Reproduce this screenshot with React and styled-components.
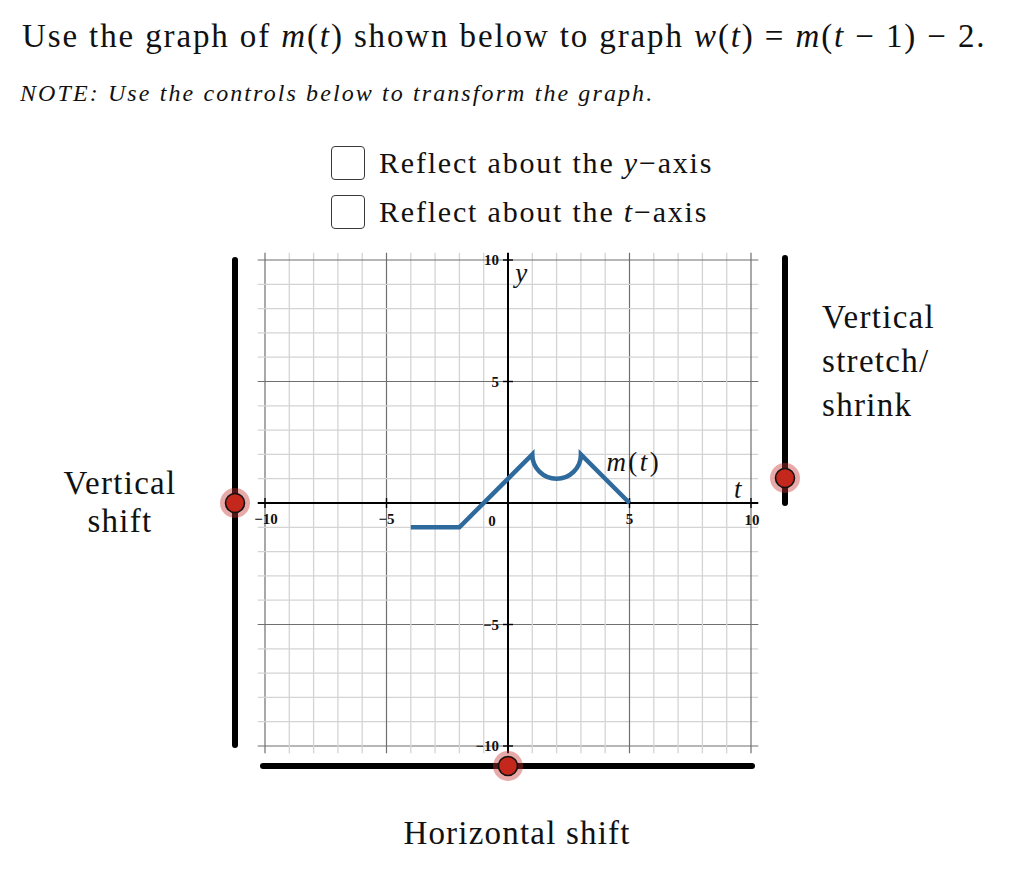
import React from 'react';
import styled, { createGlobalStyle } from 'styled-components';

const GlobalStyle = createGlobalStyle`
  body {
    margin: 0;
    background: #fff;
    color: #111;
    font-family: "Liberation Serif", "DejaVu Serif", serif;
  }
`;

const Page = styled.div`
  width: 1024px;
  padding-top: 16px;
`;

const Prompt = styled.div`
  margin-left: 22px;
  font-size: 33px;
  line-height: 40px;
  letter-spacing: 1.88px;
  white-space: nowrap;
`;

const Note = styled.div`
  margin: 22px 0 0 20px;
  font-size: 24px;
  line-height: 30px;
  font-style: italic;
  letter-spacing: 2.1px;
  white-space: nowrap;
`;

const Var = styled.i`
  font-style: italic;
`;

const Options = styled.div`
  margin: 30px 0 0 331px;
  display: flex;
  flex-direction: column;
`;

const OptionRow = styled.label`
  height: 49px;
  display: flex;
  align-items: center;
  gap: 14px;
  font-size: 30px;
  letter-spacing: 1.8px;
`;

const CheckBox = styled.span`
  box-sizing: border-box;
  width: 34px;
  height: 34px;
  border: 1.5px solid #3a3a3a;
  border-radius: 4px;
  background: #fff;
`;

const Board = styled.div`
  margin-top: 9px;
  display: grid;
  grid-template-columns: 220px 580px 1fr;
  align-items: start;
`;

const SideLabel = styled.div`
  font-size: 33px;
  letter-spacing: 1.3px;
  line-height: ${(p) => (p.$side === 'left' ? '38px' : '44px')};
  text-align: ${(p) => (p.$side === 'left' ? 'center' : 'left')};
  padding: ${(p) => (p.$side === 'left' ? '219px 0 0 20px' : '50px 0 0 22px')};
`;

const BottomLabel = styled.div`
  margin: 23px 0 0 227px;
  width: 580px;
  text-align: center;
  font-size: 33px;
  line-height: 40px;
  letter-spacing: 1.2px;
`;

const Canvas = styled.svg`
  display: block;
  overflow: visible;
`;

// board geometry (svg pixels)
const U = 24.3;
const OX = 288;
const OY = 258;
const X = (t) => OX + U * t;
const Y = (v) => OY - U * v;
const EXT = 10.3;

const BLUE = '#2f6a9c';
const range = Array.from({ length: 21 }, (_, i) => i - 10);

const Handle = ({ cx, cy }) => (
  <g>
    <circle cx={cx} cy={cy} r={15} fill="rgba(200, 50, 50, 0.42)" />
    <circle cx={cx} cy={cy} r={9.5} fill="#c4281c" stroke="#111" strokeWidth={1.6} />
  </g>
);

const tickFont = {
  fontFamily: '"Liberation Serif", serif',
  fontWeight: 700,
  fontSize: 15,
  fill: '#111',
};

const varFont = {
  fontFamily: '"Liberation Serif", serif',
  fontStyle: 'italic',
  fontSize: 27,
  fill: '#111',
};

const Graph = () => {
  const curve = [
    `M ${X(-4)} ${Y(-1)}`,
    `L ${X(-2)} ${Y(-1)}`,
    `L ${X(1)} ${Y(2)}`,
    `A ${U} ${U} 0 0 0 ${X(3)} ${Y(2)}`,
    `L ${X(5)} ${Y(0)}`,
  ].join(' ');

  return (
    <Canvas width="580" height="545" viewBox="0 0 580 545">
      {/* grid */}
      {range
        .filter((i) => i !== 0)
        .map((i) => (
          <g key={i} stroke={i % 5 === 0 ? '#6f6f6f' : '#d4d4d4'} strokeWidth={i % 5 === 0 ? 1.2 : 1.3}>
            <line x1={X(i)} y1={Y(EXT)} x2={X(i)} y2={Y(-EXT)} />
            <line x1={X(-EXT)} y1={Y(i)} x2={X(EXT)} y2={Y(i)} />
          </g>
        ))}

      {/* axes */}
      <g stroke="#000" strokeWidth={2}>
        <line x1={X(-EXT)} y1={OY} x2={X(EXT)} y2={OY} />
        <line x1={OX} y1={Y(EXT)} x2={OX} y2={Y(-EXT)} />
        {[-10, -5, 5, 10].map((i) => (
          <g key={i}>
            <line x1={X(i)} y1={OY - 5} x2={X(i)} y2={OY + 5} strokeWidth={1.4} />
            <line x1={OX - 5} y1={Y(i)} x2={OX + 5} y2={Y(i)} strokeWidth={1.4} />
          </g>
        ))}
      </g>

      {/* tick labels */}
      <g style={tickFont}>
        <text x={X(-10) + 1} y={OY + 21} textAnchor="middle">−10</text>
        <text x={X(-5)} y={OY + 21} textAnchor="middle">−5</text>
        <text x={OX - 16} y={OY + 23} textAnchor="middle">0</text>
        <text x={X(5)} y={OY + 21} textAnchor="middle">5</text>
        <text x={X(10) + 1} y={OY + 22} textAnchor="middle">10</text>
        <text x={OX - 9} y={Y(10) + 5} textAnchor="end">10</text>
        <text x={OX - 9} y={Y(5) + 5} textAnchor="end">5</text>
        <text x={OX - 9} y={Y(-5) + 5} textAnchor="end">−5</text>
        <text x={OX - 9} y={Y(-10) + 5} textAnchor="end">−10</text>
      </g>

      {/* axis names and curve label */}
      <text x={X(0.3)} y={Y(9.1)} style={varFont}>y</text>
      <text x={X(9.3)} y={OY - 5} style={varFont}>t</text>
      <text x={X(4.05)} y={Y(1.32)} style={{ ...varFont, letterSpacing: 2.4 }}>
        <tspan fontStyle="italic">m</tspan>
        <tspan fontStyle="normal">(</tspan>
        <tspan fontStyle="italic">t</tspan>
        <tspan fontStyle="normal">)</tspan>
      </text>

      <path d={curve} fill="none" stroke={BLUE} strokeWidth={4.5} strokeLinejoin="miter" />

      {/* sliders */}
      <g stroke="#000" strokeWidth={6} strokeLinecap="round">
        <line x1={15} y1={15} x2={15} y2={500} />
        <line x1={565} y1={13} x2={565} y2={OY} />
        <line x1={43} y1={521} x2={532} y2={521} />
      </g>
      <Handle cx={15} cy={OY} />
      <Handle cx={565} cy={233} />
      <Handle cx={OX} cy={521} />
    </Canvas>
  );
};

const App = () => (
  <Page>
    <GlobalStyle />
    <Prompt>
      Use the graph of <Var>m</Var>(<Var>t</Var>) shown below to graph <Var>w</Var>(<Var>t</Var>) ={' '}
      <Var>m</Var>(<Var>t</Var> − 1) − 2.
    </Prompt>
    <Note>NOTE: Use the controls below to transform the graph.</Note>
    <Options>
      <OptionRow>
        <CheckBox />
        <span>
          Reflect about the <Var>y</Var>−axis
        </span>
      </OptionRow>
      <OptionRow>
        <CheckBox />
        <span>
          Reflect about the <Var>t</Var>−axis
        </span>
      </OptionRow>
    </Options>
    <Board>
      <SideLabel $side="left">
        Vertical
        <br />
        shift
      </SideLabel>
      <Graph />
      <SideLabel $side="right">
        Vertical
        <br />
        stretch/
        <br />
        shrink
      </SideLabel>
    </Board>
    <BottomLabel>Horizontal shift</BottomLabel>
  </Page>
);

export default App;
